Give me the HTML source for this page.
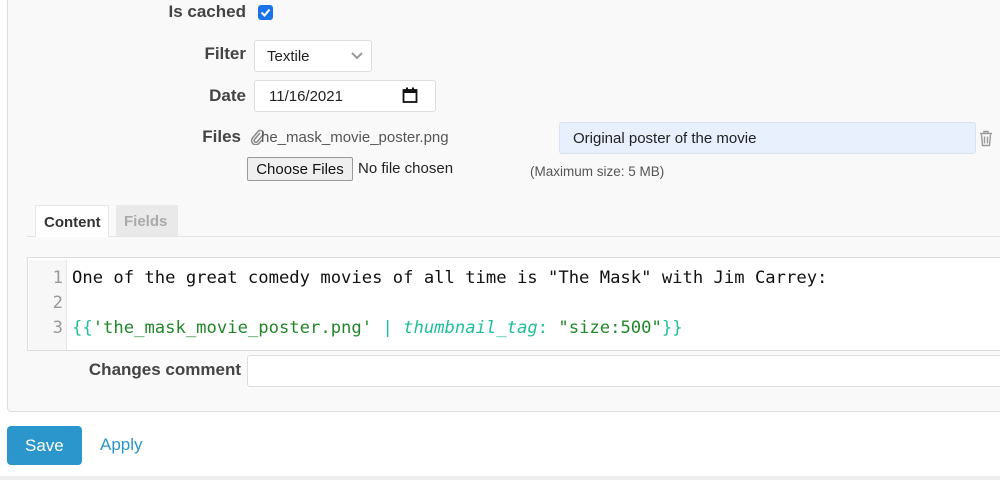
<!DOCTYPE html>
<html><head><style>
*{box-sizing:border-box;margin:0;padding:0}
body{width:1000px;height:480px;background:#fff;font-family:"Liberation Sans",sans-serif;position:relative;overflow:hidden;color:#333}
.a{position:absolute;white-space:nowrap}
.panel{left:7px;top:-5px;width:1000px;height:417px;background:#f9f9f9;border:1px solid #ddd;border-radius:4px}
.lbl{font-weight:bold;font-size:17px;color:#444;text-align:right}
.inp{background:#fff;border:1px solid #ddd;border-radius:3px;font-size:15px;color:#222}
.mono{font-family:"DejaVu Sans Mono","Liberation Mono",monospace;font-size:17.2px;white-space:pre;line-height:25px}
</style></head><body>
<div class="a panel"></div>
<div class="a lbl" style="right:754px;top:2px">Is cached</div>
<div class="a" style="left:258px;top:5px;width:15px;height:15px;background:#1a73e8;border-radius:3px"><svg width="15" height="15" viewBox="0 0 15 15"><path d="M3.5 7.5l3 3 5-6" stroke="#fff" stroke-width="2" fill="none"/></svg></div>
<div class="a lbl" style="right:754px;top:44px">Filter</div>
<div class="a inp" style="left:254px;top:40px;width:118px;height:32px;padding:7px 12px">Textile</div>
<svg class="a" style="left:351px;top:51px" width="12" height="10" viewBox="0 0 12 10"><path d="M1 2l5 5 5-5" stroke="#999" stroke-width="2" fill="none"/></svg>
<div class="a lbl" style="right:754px;top:86px">Date</div>
<div class="a inp" style="left:254px;top:80px;width:182px;height:32px;padding:7px 14px">11/16/2021</div>
<svg class="a" style="left:402px;top:87px" width="16" height="17" viewBox="0 0 16 17"><rect x="1.5" y="3" width="13" height="12" fill="none" stroke="#111" stroke-width="1.8"/><rect x="1.5" y="3" width="13" height="3" fill="#111"/><rect x="4" y="0.5" width="2" height="3" fill="#111"/><rect x="10" y="0.5" width="2" height="3" fill="#111"/></svg>
<div class="a lbl" style="right:759px;top:127px">Files</div>
<svg class="a" style="left:250px;top:129px" width="14" height="16" viewBox="0 0 14 16"><path d="M10 4L4.5 10.5a1.8 1.8 0 0 0 2.6 2.4L12.5 6.5a3 3 0 0 0-4.3-4.2L2.5 9a4.2 4.2 0 0 0 6 5.8L12 11" stroke="#888" stroke-width="1.5" fill="none"/></svg>
<div class="a" style="left:261px;top:129px;font-size:15px;color:#555">he_mask_movie_poster.png</div>
<div class="a" style="left:247px;top:157px;width:106px;height:24px;background:#efefef;border:1px solid #999;border-radius:2px;font-size:15px;color:#111;padding:3px 0;text-align:center">Choose Files</div>
<div class="a" style="left:358px;top:160px;font-size:15px;color:#222">No file chosen</div>
<div class="a inp" style="left:559px;top:122px;width:417px;height:32px;background:#e8f0fe;border-color:#d8e2f0;padding:7px 13px;font-size:15px">Original poster of the movie</div>
<svg class="a" style="left:978px;top:130px" width="16" height="17" viewBox="0 0 16 17"><path d="M2 3.5h12M6 3V1.5h4V3M3.5 4.5l1 11h7l1-11M6.5 6.5v7M9.5 6.5v7" stroke="#999" stroke-width="1.4" fill="none"/></svg>
<div class="a" style="left:530px;top:164px;font-size:13.5px;color:#555">(Maximum size: 5 MB)</div>
<div class="a" style="left:27px;top:236px;width:980px;height:1px;background:#e5e5e5"></div>
<div class="a" style="left:35px;top:205px;width:74px;height:32px;background:#fff;border:1px solid #e5e5e5;border-bottom:none;font-weight:bold;font-size:15px;color:#333;padding:8px 8px">Content</div>
<div class="a" style="left:116px;top:205px;width:62px;height:31px;background:#e9e9e9;font-weight:bold;font-size:15px;color:#aaa;padding:8px 8px">Fields</div>
<div class="a" style="left:27px;top:257px;width:980px;height:94px;background:#fff;border:1px solid #ddd"></div>
<div class="a" style="left:29px;top:260px;width:38px;height:90px;background:#f7f7f7;border-right:1px solid #e5e5e5"></div>
<div class="a mono" style="left:29px;top:266px;width:34px;text-align:right;color:#999">1
2
3</div>
<div class="a mono" style="left:72px;top:266px;color:#111">One of the great comedy movies of all time is "The Mask" with Jim Carrey:

<span style="color:#1fbf9a">{{</span><span style="color:#22862a">'the_mask_movie_poster.png'</span><span style="color:#1fbf9a"> | <i>thumbnail_tag</i>: </span><span style="color:#22862a">"size:500"</span><span style="color:#1fbf9a">}}</span></div>
<div class="a lbl" style="right:759px;top:360px">Changes comment</div>
<div class="a inp" style="left:247px;top:355px;width:760px;height:32px"></div>
<div class="a" style="left:7px;top:426px;width:75px;height:39px;background:#2b96cc;border-radius:4px;color:#fff;font-size:17px;padding:10px 18px">Save</div>
<div class="a" style="left:100px;top:435px;font-size:17px;color:#2b96cc">Apply</div>
<div class="a" style="left:0;top:476px;width:1000px;height:4px;background:#eee"></div>
</body></html>
